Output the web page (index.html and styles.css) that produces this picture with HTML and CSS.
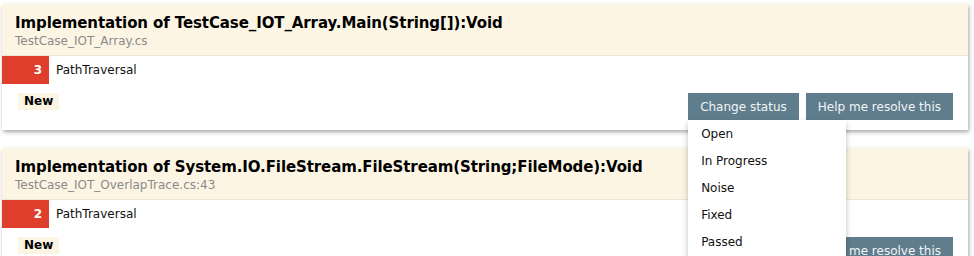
FILE: index.html
```html
<!DOCTYPE html>
<html>
<head>
<meta charset="utf-8">
<link rel="stylesheet" href="styles.css">
</head>
<body>
<div class="list">
  <div class="card">
    <div class="card-head">
      <div class="title">Implementation of TestCase_IOT_Array.Main(String[]):Void</div>
      <div class="file">TestCase_IOT_Array.cs</div>
    </div>
    <div class="rule">
      <span class="count">3</span>
      <span class="rule-name">PathTraversal</span>
    </div>
    <div class="card-foot">
      <span class="tag">New</span>
      <div class="actions">
        <div class="dd">
          <button class="btn">Change status</button>
          <ul class="menu">
            <li>Open</li>
            <li>In Progress</li>
            <li>Noise</li>
            <li>Fixed</li>
            <li>Passed</li>
          </ul>
        </div>
        <button class="btn">Help me resolve this</button>
      </div>
    </div>
  </div>
  <div class="card">
    <div class="card-head">
      <div class="title">Implementation of System.IO.FileStream.FileStream(String;FileMode):Void</div>
      <div class="file">TestCase_IOT_OverlapTrace.cs:43</div>
    </div>
    <div class="rule">
      <span class="count">2</span>
      <span class="rule-name">PathTraversal</span>
    </div>
    <div class="card-foot">
      <span class="tag">New</span>
      <div class="actions">
        <button class="btn">Change status</button>
        <button class="btn">Help me resolve this</button>
      </div>
    </div>
  </div>
</div>
</body>
</html>
```
FILE: styles.css
```css
html, body {
  margin: 0;
  padding: 0;
  background: #ffffff;
}
body {
  font-family: "DejaVu Sans", Verdana, sans-serif;
  color: #111;
}
.list {
  display: flex;
  flex-direction: column;
  gap: 18px;
  padding: 4px 6px 0 2px;
}
.card {
  background: #fff;
  box-shadow: 1px 2px 4px rgba(0, 0, 0, 0.35);
}
.card-head {
  background: #fdf5e4;
  border-bottom: 1px solid #ece6da;
  padding: 10px 13px 4px;
  height: 37px;
}
.title {
  font-size: 15px;
  font-weight: bold;
  color: #000;
  line-height: 19px;
  white-space: nowrap;
  letter-spacing: -0.1px;
}
.file {
  font-size: 12px;
  color: #8a8a8a;
  line-height: 17px;
}
.rule {
  display: flex;
  align-items: center;
  height: 28px;
}
.count {
  width: 47px;
  height: 28px;
  box-sizing: border-box;
  background: #e03e2d;
  color: #fff;
  font-weight: bold;
  font-size: 12px;
  line-height: 28px;
  text-align: right;
  padding-right: 7px;
}
.rule-name {
  font-size: 12px;
  margin-left: 7px;
  color: #111;
}
.card-foot {
  display: flex;
  justify-content: space-between;
  align-items: flex-start;
  padding: 9px 15px 10px 16px;
}
.tag {
  background: #fdf5e4;
  font-weight: bold;
  font-size: 12px;
  line-height: 17px;
  padding: 0 6px;
  color: #000;
}
.actions {
  display: flex;
  gap: 7px;
}
.dd {
  position: relative;
}
.btn {
  font-family: "DejaVu Sans", Verdana, sans-serif;
  background: #5f7d8c;
  color: #f2f5f7;
  border: 0;
  font-size: 12px;
  height: 27px;
  padding: 0 12px;
  cursor: pointer;
}
.menu {
  position: absolute;
  top: 27px;
  left: 0;
  width: 158px;
  margin: 0;
  padding: 1px 0 0;
  list-style: none;
  background: #fff;
  box-shadow: 0 3px 6px rgba(0, 0, 0, 0.25);
  z-index: 5;
}
.menu li {
  font-size: 12px;
  height: 27px;
  line-height: 27px;
  padding-left: 13px;
  color: #111;
}
```
